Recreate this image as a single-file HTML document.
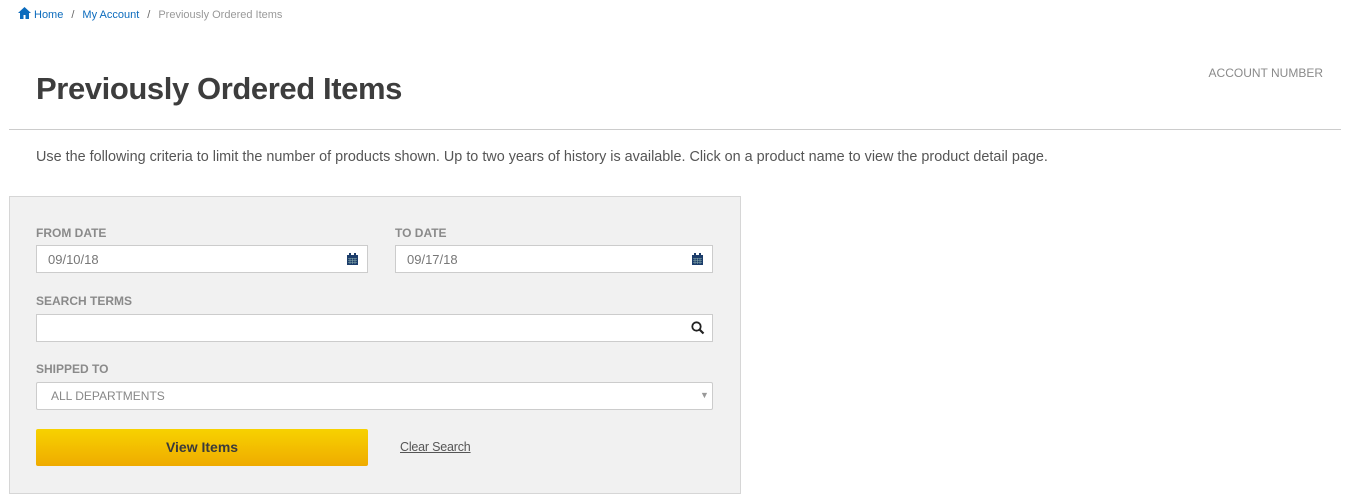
<!DOCTYPE html>
<html><head><meta charset="utf-8"><style>
*{box-sizing:border-box;margin:0;padding:0}
body{width:1347px;height:504px;background:#fff;font-family:"Liberation Sans",Arial,sans-serif;position:relative;overflow:hidden;color:#555}
.a{position:absolute}
.bc{top:7px;left:18px;font-size:11px;color:#999;white-space:nowrap}
.bc a{color:#0b6bbd;text-decoration:none}
.bc span.s{color:#666;margin:0 8px}
h1{position:absolute;left:36px;top:71px;font-size:31px;font-weight:bold;color:#3d3d3d;letter-spacing:-0.4px}
.acct{right:24px;top:66px;font-size:12px;color:#8a8a8a}
.hr{left:9px;top:129px;width:1332px;height:1px;background:#ccc}
.intro{left:36px;top:149px;font-size:14.4px;color:#555}
.panel{left:9px;top:196px;width:732px;height:298px;background:#f1f1f1;border:1px solid #d6d6d6}
.lbl{font-size:12px;font-weight:bold;color:#8a8a8a}
.inp{background:#fff;border:1px solid #ccc;height:28px;font-size:13px;color:#777;padding:6px 0 0 11px}
.btn{left:36px;top:429px;width:332px;height:37px;border-radius:2px;background:linear-gradient(#f7d200,#efab00);font-size:14px;font-weight:bold;color:#3a3a3a;text-align:center;line-height:37px}
.clr{left:400px;top:440px;font-size:12.5px;color:#555;text-decoration:underline;letter-spacing:-0.2px}
</style></head><body>
<div class="a bc"><svg width="13" height="12" viewBox="0 0 13 12" style="vertical-align:-1px;margin-right:3px"><path d="M6.5 0L0 6h2v6h3.5V8h2v4H11V6h2z" fill="#0b6bbd"/></svg><a>Home</a><span class="s">/</span><a>My Account</a><span class="s">/</span>Previously Ordered Items</div>
<h1>Previously Ordered Items</h1>
<div class="a acct">ACCOUNT NUMBER</div>
<div class="a hr"></div>
<div class="a intro">Use the following criteria to limit the number of products shown. Up to two years of history is available. Click on a product name to view the product detail page.</div>
<div class="a panel"></div>
<div class="a lbl" style="left:36px;top:226px">FROM DATE</div>
<div class="a lbl" style="left:395px;top:226px">TO DATE</div>
<div class="a inp" style="left:36px;top:245px;width:332px">09/10/18</div>
<div class="a inp" style="left:395px;top:245px;width:318px">09/17/18</div>
<svg class="a" style="left:347px;top:253px" width="11" height="12" viewBox="0 0 11 12"><rect x="0" y="2" width="11" height="10" fill="#1c3d6b"/><rect x="2" y="0" width="2" height="3" fill="#1c3d6b"/><rect x="7" y="0" width="2" height="3" fill="#1c3d6b"/><path d="M1 5.5h9M1 7.5h9M1 9.5h9M3 5v6M5.5 5v6M8 5v6" stroke="#8aa" stroke-width=".6"/></svg>
<svg class="a" style="left:692px;top:253px" width="11" height="12" viewBox="0 0 11 12"><rect x="0" y="2" width="11" height="10" fill="#1c3d6b"/><rect x="2" y="0" width="2" height="3" fill="#1c3d6b"/><rect x="7" y="0" width="2" height="3" fill="#1c3d6b"/><path d="M1 5.5h9M1 7.5h9M1 9.5h9M3 5v6M5.5 5v6M8 5v6" stroke="#8aa" stroke-width=".6"/></svg>
<div class="a lbl" style="left:36px;top:294px">SEARCH TERMS</div>
<div class="a inp" style="left:36px;top:314px;width:677px"></div>
<svg class="a" style="left:691px;top:321px" width="14" height="14" viewBox="0 0 14 14"><circle cx="5.5" cy="5.5" r="4.2" fill="none" stroke="#222" stroke-width="1.8"/><path d="M8.5 8.5L12.5 12.5" stroke="#222" stroke-width="2.2"/></svg>
<div class="a lbl" style="left:36px;top:362px">SHIPPED TO</div>
<div class="a inp" style="left:36px;top:382px;width:677px;font-size:12px;padding:6px 0 0 14px;color:#888;border-radius:2px">ALL DEPARTMENTS</div>
<div class="a" style="left:700px;top:390px;font-size:9px;color:#999">▼</div>
<div class="a btn">View Items</div>
<div class="a clr">Clear Search</div>
</body></html>
